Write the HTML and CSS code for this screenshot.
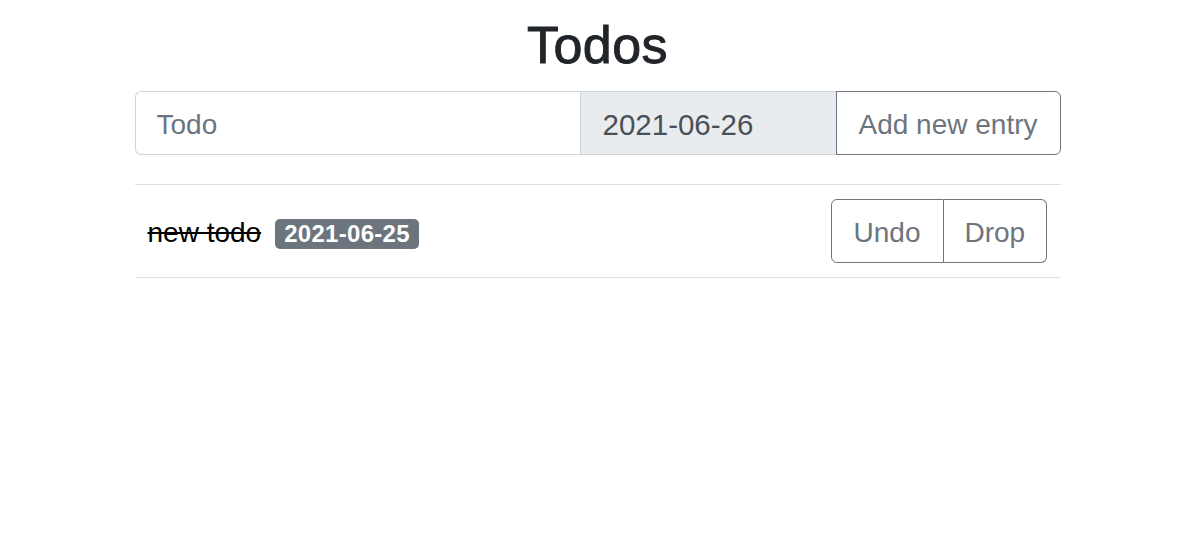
FILE: index.html
```html
<!DOCTYPE html>
<html lang="en">
<head>
<meta charset="utf-8">
<title>Todos</title>
<link rel="stylesheet" href="styles.css">
</head>
<body>
<main class="container">
  <h1 class="title">Todos</h1>
  <form class="input-group">
    <input class="todo-input" type="text" placeholder="Todo">
    <span class="date-field">2021-06-26</span>
    <button class="btn btn-add" type="button">Add new entry</button>
  </form>
  <ul class="todo-list">
    <li class="todo-item">
      <div class="todo-text">
        <span class="done">new todo</span>
        <span class="badge">2021-06-25</span>
      </div>
      <div class="btn-group">
        <button class="btn btn-undo" type="button">Undo</button>
        <button class="btn btn-drop" type="button">Drop</button>
      </div>
    </li>
  </ul>
</main>
</body>
</html>
```

FILE: styles.css
```css
* { box-sizing: border-box; }

body {
  margin: 0;
  padding: 0 5px 0 0;
  background: #ffffff;
  color: #212529;
  font-family: "Liberation Sans", Arial, Helvetica, sans-serif;
}

.container {
  width: 926px;
  margin: 0 auto;
}

.title {
  margin: 14px 0 15px 0;
  font-size: 52px;
  line-height: 1.2;
  font-weight: 400;
  -webkit-text-stroke: 0.9px #212529;
  letter-spacing: 0.4px;
  text-align: center;
  color: #212529;
}

.input-group {
  display: flex;
  height: 64px;
  margin: 0;
}

.todo-input {
  flex: 1 1 auto;
  min-width: 0;
  height: 64px;
  padding: 3px 21px 0 21px;
  font-family: inherit;
  font-size: 28px;
  color: #495057;
  border: 1px solid #ced4da;
  border-right: none;
  border-radius: 6px 0 0 6px;
  outline: none;
  background: #fff;
}

.todo-input::placeholder { color: #6c757d; }

.date-field {
  display: flex;
  align-items: center;
  width: 256px;
  height: 64px;
  padding: 3px 21px 0 22px;
  font-size: 29.5px;
  color: #495057;
  background: #e9ecef;
  border: 1px solid #ced4da;
  border-right: none;
}

.btn {
  font-family: inherit;
  font-size: 28px;
  color: #6c757d;
  background: #fff;
  border: 1px solid #6c757d;
  padding: 3px 21px 0 21px;
  height: 64px;
  cursor: pointer;
}

.btn-add {
  width: 225px;
  border-radius: 0 6px 6px 0;
}

.todo-list {
  list-style: none;
  margin: 29px 0 0 0;
  padding: 0;
}

.todo-item {
  display: flex;
  align-items: center;
  justify-content: space-between;
  padding: 14px 14px 14px 13px;
  border-top: 1px solid #dcdfe3;
  border-bottom: 1px solid #dcdfe3;
}

.todo-text {
  display: flex;
  align-items: center;
  gap: 14px;
  padding-top: 4px;
}

.done {
  font-size: 28px;
  color: #000;
  text-decoration: line-through;
}

.badge {
  display: inline-block;
  background: #6c757d;
  color: #fff;
  font-weight: 700;
  font-size: 24px;
  line-height: 30px;
  padding: 0 9px;
  letter-spacing: 0.3px;
  border-radius: 5px;
  margin-top: 2px;
}

.btn-group {
  display: flex;
}

.btn-undo {
  width: 113px;
  border-radius: 6px 0 0 6px;
}

.btn-drop {
  width: 103px;
  border-left: none;
  border-radius: 0 6px 6px 0;
}
```
